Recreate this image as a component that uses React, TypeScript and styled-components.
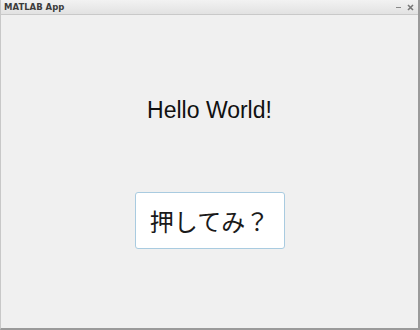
import React from "react";
import styled, { createGlobalStyle } from "styled-components";

const Global = createGlobalStyle`
  html, body {
    margin: 0;
    padding: 0;
    background: #efefef;
  }
  body {
    font-family: "Liberation Sans", Arial, sans-serif;
  }
`;

const Window = styled.div`
  width: 420px;
  height: 330px;
  box-sizing: border-box;
  display: flex;
  flex-direction: column;
  background: #f0f0f0;
  border-left: 1px solid #c8c8c8;
  border-right: 2px solid #9a9a9a;
  border-bottom: 2px solid #9a9a9a;
`;

const TitleBar = styled.div`
  height: 14px;
  flex: 0 0 auto;
  display: flex;
  align-items: center;
  justify-content: space-between;
  padding: 0 4px 0 3px;
  background: linear-gradient(#f2f2f2, #e2e2e2);
  border-bottom: 1px solid #c9c9c9;
`;

const Title = styled.span`
  font-family: "DejaVu Sans", sans-serif;
  font-size: 8.5px;
  font-weight: bold;
  color: #3c3c3c;
`;

const Controls = styled.div`
  display: flex;
  align-items: center;
  gap: 5px;
  color: #777;
`;

const Body = styled.div`
  flex: 1;
  display: flex;
  flex-direction: column;
  align-items: center;
  padding-top: 81px;
`;

const Label = styled.div`
  font-size: 23px;
  color: #111;
  line-height: 28px;
`;

const PushButton = styled.button`
  margin-top: 68px;
  width: 150px;
  height: 57px;
  background: #fff;
  border: 1px solid #a9cbe0;
  border-radius: 3px;
  font-family: "Liberation Sans", "Noto Sans CJK JP", sans-serif;
  font-size: 24px;
  color: #1a1a1a;
  padding: 0;
`;

export default function App() {
  return (
    <>
      <Global />
      <Window>
        <TitleBar>
          <Title>MATLAB App</Title>
          <Controls>
            <svg width="6" height="6" viewBox="0 0 6 6">
              <path d="M0 3.5h5" stroke="#888" strokeWidth="1" />
            </svg>
            <svg width="7" height="7" viewBox="0 0 7 7">
              <path d="M1 1l5 5M6 1l-5 5" stroke="#777" strokeWidth="1.6" />
            </svg>
          </Controls>
        </TitleBar>
        <Body>
          <Label>Hello World!</Label>
          <PushButton>押してみ？</PushButton>
        </Body>
      </Window>
    </>
  );
}
